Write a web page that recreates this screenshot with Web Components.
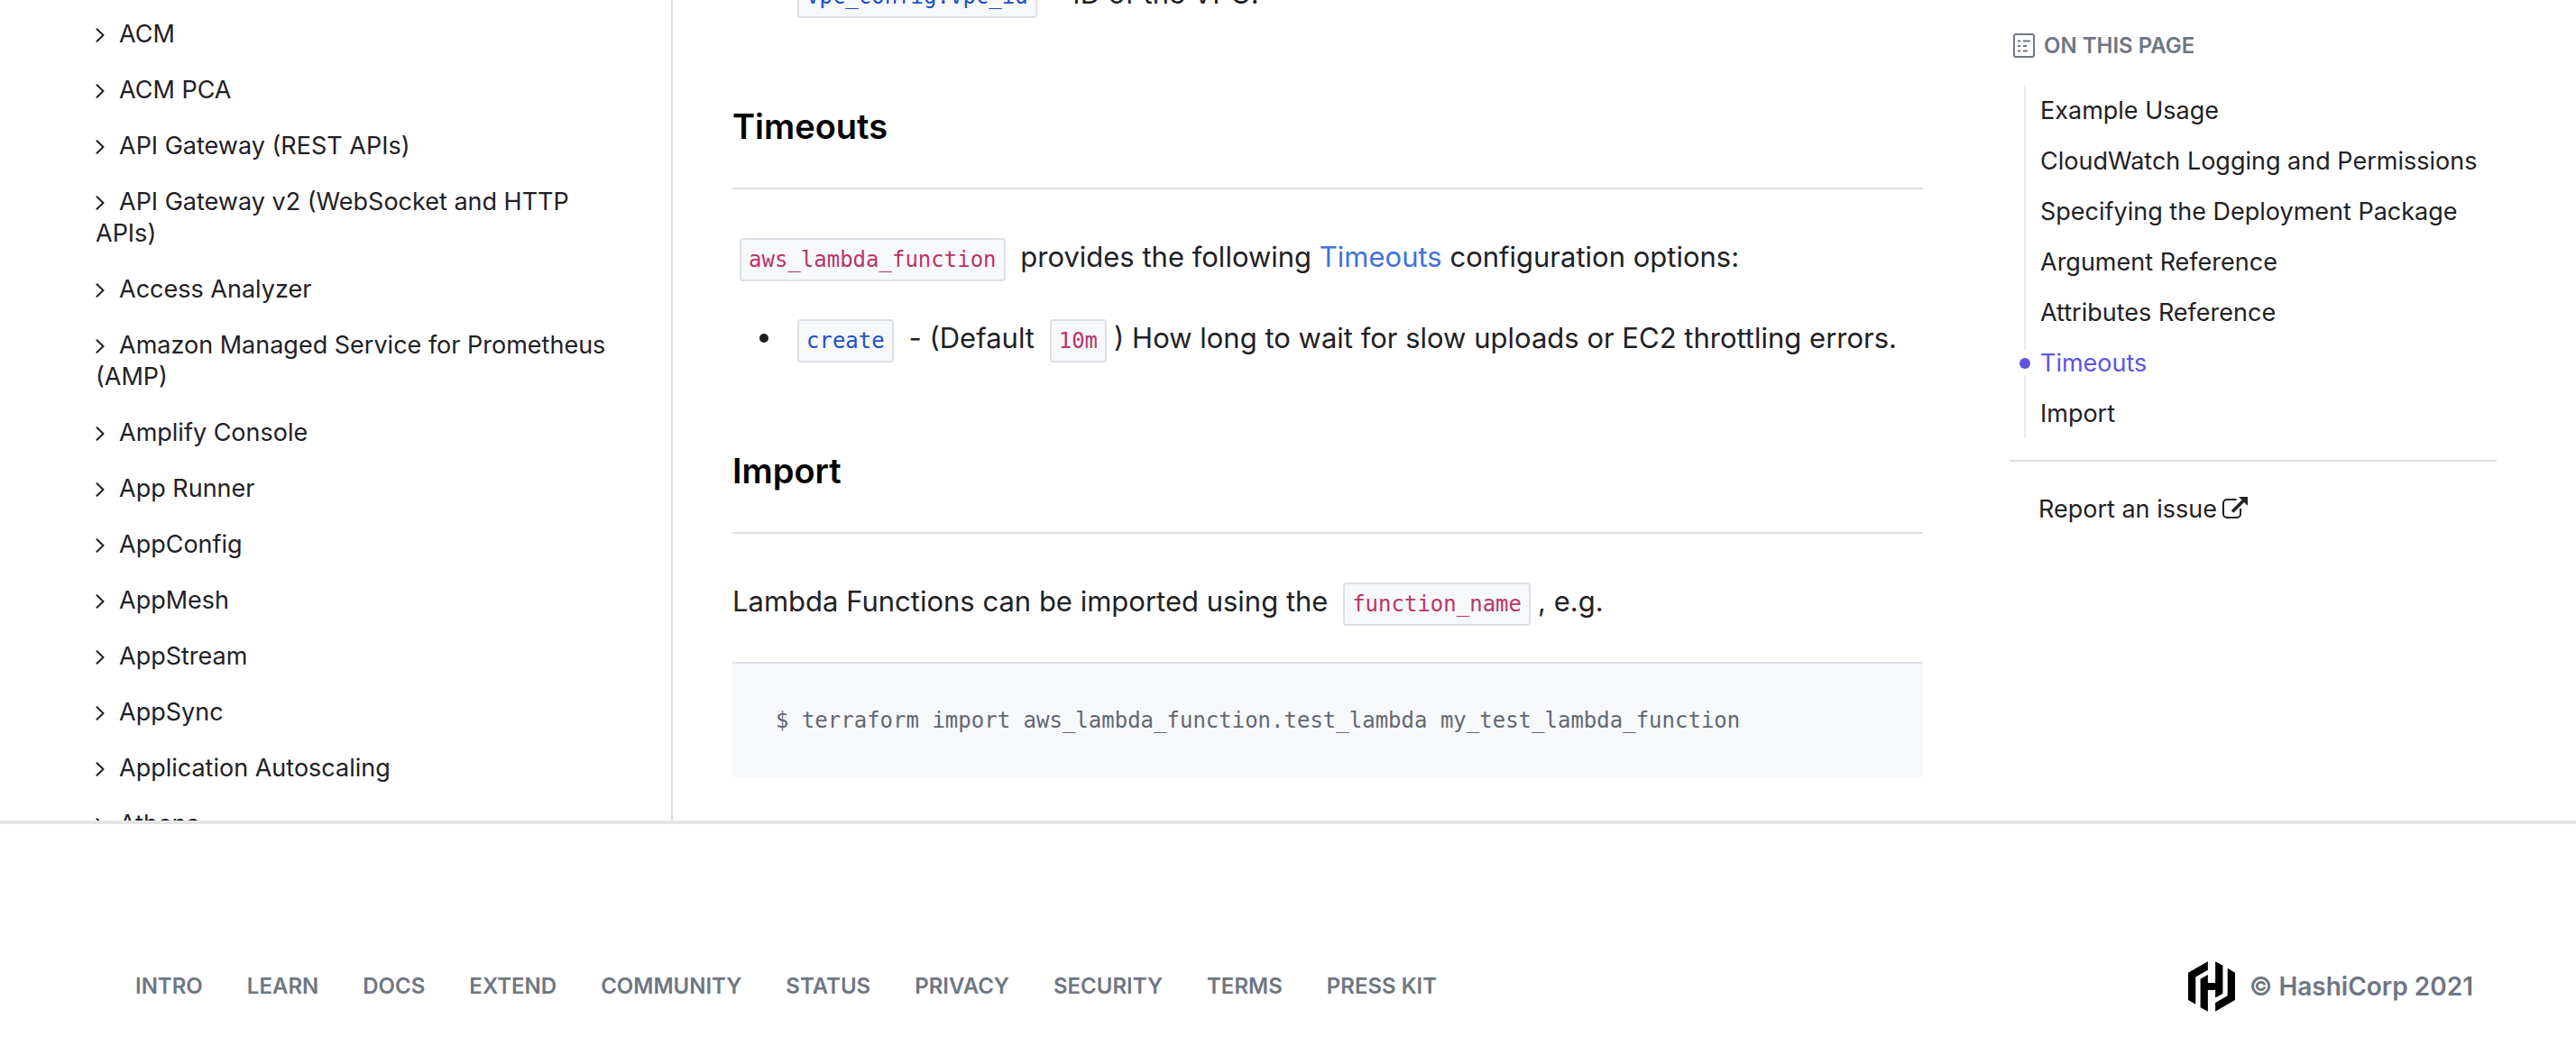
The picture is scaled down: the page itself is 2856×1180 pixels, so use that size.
<!DOCTYPE html>
<html lang="en">
<head>
<meta charset="utf-8">
<title>aws_lambda_function | Terraform Registry</title>
<style>
  body {
    margin: 0;
    background-color: #fff;
    color: #1f2124;
    font-family: Inter, "Liberation Sans", sans-serif;
  }
</style>
</head>
<body>
<docs-layout>
  <docs-sidebar slot="sidebar">
    <sidebar-item>ACM</sidebar-item>
    <sidebar-item>ACM PCA</sidebar-item>
    <sidebar-item>API Gateway (REST APIs)</sidebar-item>
    <sidebar-item>API Gateway v2 (WebSocket and HTTP APIs)</sidebar-item>
    <sidebar-item>Access Analyzer</sidebar-item>
    <sidebar-item>Amazon Managed Service for Prometheus (AMP)</sidebar-item>
    <sidebar-item>Amplify Console</sidebar-item>
    <sidebar-item>App Runner</sidebar-item>
    <sidebar-item>AppConfig</sidebar-item>
    <sidebar-item>AppMesh</sidebar-item>
    <sidebar-item>AppStream</sidebar-item>
    <sidebar-item>AppSync</sidebar-item>
    <sidebar-item>Application Autoscaling</sidebar-item>
    <sidebar-item>Athena</sidebar-item>
  </docs-sidebar>
  <docs-article></docs-article>
  <page-toc slot="toc">
    <toc-link href="#example-usage">Example Usage</toc-link>
    <toc-link href="#cloudwatch">CloudWatch Logging and Permissions</toc-link>
    <toc-link href="#deployment-package">Specifying the Deployment Package</toc-link>
    <toc-link href="#argument-reference">Argument Reference</toc-link>
    <toc-link href="#attributes-reference">Attributes Reference</toc-link>
    <toc-link href="#timeouts" active>Timeouts</toc-link>
    <toc-link href="#import">Import</toc-link>
  </page-toc>
</docs-layout>
<site-footer></site-footer>

<script>
class DocsLayout extends HTMLElement {
  constructor() {
    super();
    this.attachShadow({ mode: 'open' });
    this.shadowRoot.innerHTML = `
    <style>
      :host {
        display: grid;
        grid-template-columns: 746px minmax(0, 1fr) 540px;
        padding-right: 88px;
        overflow: hidden;
      }
      main {
        padding: 0 96px 48px 66px;
      }
    </style>
    <slot name="sidebar"></slot>
    <main><slot></slot></main>
    <slot name="toc"></slot>`;
  }
}

class DocsSidebar extends HTMLElement {
  constructor() {
    super();
    this.attachShadow({ mode: 'open' });
    // size containment keeps the long list from making the page taller
    this.shadowRoot.innerHTML = `
    <style>
      :host {
        display: block;
        contain: size;
        overflow: hidden;
        border-right: 2px solid #dce0e6;
      }
      nav {
        display: flex;
        flex-direction: column;
        padding: 6px 48px 0 106px;
      }
    </style>
    <nav aria-label="Services"><slot></slot></nav>`;
  }
}

class SidebarItem extends HTMLElement {
  constructor() {
    super();
    this.attachShadow({ mode: 'open' });
    this.shadowRoot.innerHTML = `
    <style>
      :host {
        display: block;
      }
      button {
        display: block;
        width: 100%;
        padding: 14px 0 13px;
        border: 0;
        background: none;
        color: inherit;
        font: 27px/35px Inter, "Liberation Sans", sans-serif;
        text-align: left;
        cursor: pointer;
      }
      svg {
        width: 10px;
        height: 16px;
        margin-right: 16px;
      }
    </style>
    <button type="button" aria-expanded="false"><svg viewBox="0 0 10 16" fill="none" stroke="currentColor" stroke-width="2" stroke-linecap="round" stroke-linejoin="round" aria-hidden="true"><path d="M1.500 1.200 8.500 8l-7 6.800"/></svg><slot></slot></button>`;
  }
}

class InlineCode extends HTMLElement {
  constructor() {
    super();
    this.attachShadow({ mode: 'open' });
    this.shadowRoot.innerHTML = `<style>
      :host {
        display: inline;
      }
      code {
        margin: 0 8px;
        padding: 8px;
        border: 2px solid #dce0e6;
        border-radius: 4px;
        background-color: #f7f8fa;
        color: #b93469;
        font: 24px/24px "DejaVu Sans Mono", monospace;
      }
      :host([linked]) code {
        color: #1c50c7;
      }
    </style><code><slot></slot></code>`;
  }
}

class SectionHeading extends HTMLElement {
  constructor() {
    super();
    this.attachShadow({ mode: 'open' });
    this.shadowRoot.innerHTML = `
    <style>
      :host {
        display: block;
      }
      h2 {
        margin: 98px 0 50px;
        padding-bottom: 44px;
        border-bottom: 2px solid #dce0e6;
        color: #000;
        font-size: 38px;
        line-height: 48px;
        font-weight: 600;
      }
    </style>
    <h2><slot></slot></h2>`;
  }
}

class DocsArticle extends HTMLElement {
  constructor() {
    super();
    this.attachShadow({ mode: 'open' });
    this.render();
  }

  render() {
    const style = `
    <style>
      :host {
        display: block;
        font-size: 31px;
        line-height: 50px;
      }
      p {
        margin: 0 0 40px;
      }
      ul {
        margin: 0;
        padding-left: 64px;
        list-style: none;
      }
      li::before {
        content: "";
        display: inline-block;
        width: 10px;
        height: 10px;
        margin: 0 24px 0 -34px;
        border-radius: 50%;
        background-color: currentColor;
        vertical-align: 6px;
      }
      /* the page is scrolled into the middle of this list */
      .attributes {
        margin-top: -32px;
      }
      a {
        color: #4172d9;
        text-decoration: none;
      }
      pre {
        margin: 42px 0 0;
        padding: 48px;
        border-top: 2px solid #dce0e6;
        background-color: #f7f8fa;
        color: #626873;
        font: 24px/30px "DejaVu Sans Mono", monospace;
        overflow: hidden;
      }
    </style>`;

    const template = `
    <ul class="attributes">
      <li><a href="#vpc_id"><inline-code linked>vpc_config.vpc_id</inline-code></a> - ID of the VPC.</li>
    </ul>
    <section-heading>Timeouts</section-heading>
    <p><inline-code>aws_lambda_function</inline-code> provides the following <a href="#timeouts">Timeouts</a> configuration options:</p>
    <ul>
      <li><a href="#create"><inline-code linked>create</inline-code></a> - (Default <inline-code>10m</inline-code>) How long to wait for slow uploads or EC2 throttling errors.</li>
    </ul>
    <section-heading>Import</section-heading>
    <p>Lambda Functions can be imported using the <inline-code>function_name</inline-code>, e.g.</p>
    <pre>$ terraform import aws_lambda_function.test_lambda my_test_lambda_function</pre>`;

    this.shadowRoot.innerHTML = `${style} ${template}`;
  }
}

class TocLink extends HTMLElement {
  constructor() {
    super();
    this.attachShadow({ mode: 'open' });
    this.shadowRoot.innerHTML = `
    <style>
      :host {
        display: flex;
        align-items: center;
        height: 56px;
      }
      a {
        padding-top: 2px;
        color: inherit;
        font-size: 27px;
        line-height: 34px;
        text-decoration: none;
      }
      .marker {
        display: flex;
        flex-direction: column;
        align-items: center;
        align-self: stretch;
        width: 14px;
        margin: 0 10px;
      }
      .marker::before, .marker::after {
        content: "";
        flex: 1;
        width: 2px;
        background-color: #ebebeb;
      }
      .dot {
        display: none;
        width: 12px;
        height: 12px;
        margin: 9px 0 7px;
        border-radius: 50%;
        background-color: #5c55dd;
      }
      :host([active]) a {
        color: #5c55dd;
      }
      :host([active]) .dot {
        display: block;
      }
    </style>
    <span class="marker"><span class="dot"></span></span>
    <a><slot></slot></a>`;
  }

  attributeChangedCallback(attr, oldVal, newVal) {
    this.shadowRoot.querySelector('a').setAttribute('href', newVal);
  }

  static get observedAttributes() {
    return ['href'];
  }
}

class PageToc extends HTMLElement {
  constructor() {
    super();
    this.attachShadow({ mode: 'open' });
    this.render();
  }

  render() {
    const style = `
    <style>
      :host {
        display: block;
      }
      .title {
        display: flex;
        align-items: center;
        gap: 10px;
        padding: 35px 0 27px 4px;
        color: #6f7682;
        font-size: 24px;
        line-height: 32px;
        font-weight: 600;
      }
      .title svg {
        width: 24px;
        height: 28px;
      }
      nav {
        display: flex;
        flex-direction: column;
        padding-bottom: 24px;
        border-bottom: 2px solid #dce0e6;
      }
      .issue {
        display: inline-flex;
        align-items: center;
        gap: 6px;
        margin: 36px 0 0 32px;
        color: inherit;
        font-size: 27px;
        line-height: 34px;
        text-decoration: none;
      }
      .issue svg {
        width: 28px;
        height: 28px;
      }
    </style>`;

    const template = `
    <div class="title">
      <svg viewBox="0 0 24 28" fill="none" stroke="currentColor" stroke-width="2" aria-hidden="true">
        <rect x="1" y="1" width="22" height="25" rx="2"/>
        <path d="M5 8.500h3M11 8.500h8M5 14h3M11 14h4M5 19.500h3M11 19.500h5"/>
      </svg>
      <span>ON THIS PAGE</span>
    </div>
    <nav aria-label="On this page"><slot></slot></nav>
    <a class="issue" href="#report">Report an issue
      <svg viewBox="0 0 28 28" fill="none" stroke="currentColor" stroke-width="2" aria-hidden="true">
        <path d="M15.500 3H5a4 4 0 0 0-4 4v12a4 4 0 0 0 4 4h11a4 4 0 0 0 4-4v-6"/>
        <path d="M11 16.500 23 4.500" stroke-width="3.500"/>
        <path d="M18 0h10v10z" fill="currentColor" stroke="none"/>
      </svg>
    </a>`;

    this.shadowRoot.innerHTML = `${style} ${template}`;
  }
}

class SiteFooter extends HTMLElement {
  constructor() {
    super();
    this.attachShadow({ mode: 'open' });
    this.render();
  }

  render() {
    const links = ['INTRO', 'LEARN', 'DOCS', 'EXTEND', 'COMMUNITY', 'STATUS', 'PRIVACY', 'SECURITY', 'TERMS', 'PRESS KIT'];

    const style = `
    <style>
      :host {
        display: block;
        border-top: 4px solid #e5e5e5;
        color: #6f7682;
        font-weight: 600;
      }
      footer {
        display: flex;
        align-items: center;
        justify-content: space-between;
        padding: 152px 114px 58px 150px;
      }
      nav {
        display: flex;
        gap: 49px;
      }
      a {
        color: inherit;
        font-size: 24px;
        line-height: 32px;
        text-decoration: none;
      }
      .brand {
        display: flex;
        align-items: center;
        gap: 16px;
        font-size: 28px;
        line-height: 34px;
      }
      .brand svg {
        width: 52px;
        height: 56px;
        fill: #000;
      }
    </style>`;

    const template = `
    <footer>
      <nav aria-label="Footer">${links.map((text) => `<a href="#${text.toLowerCase().replace(' ', '-')}">${text}</a>`).join('')}</nav>
      <div class="brand">
        <svg viewBox="78 78 157 168" aria-hidden="true">
          <path d="M78 116 144 78v29l-41 23v92l-25-15z"/>
          <path d="M119 137l25-14v27h25V78l25 14v94l-25 14v-26h-25v72l-25-14z"/>
          <path d="M210 101l25 15v91l-66 39v-30l41-23z"/>
        </svg>
        <span>© HashiCorp 2021</span>
      </div>
    </footer>`;

    this.shadowRoot.innerHTML = `${style} ${template}`;
  }
}

customElements.define('docs-layout', DocsLayout);
customElements.define('docs-sidebar', DocsSidebar);
customElements.define('sidebar-item', SidebarItem);
customElements.define('inline-code', InlineCode);
customElements.define('section-heading', SectionHeading);
customElements.define('docs-article', DocsArticle);
customElements.define('toc-link', TocLink);
customElements.define('page-toc', PageToc);
customElements.define('site-footer', SiteFooter);
</script>
</body>
</html>
